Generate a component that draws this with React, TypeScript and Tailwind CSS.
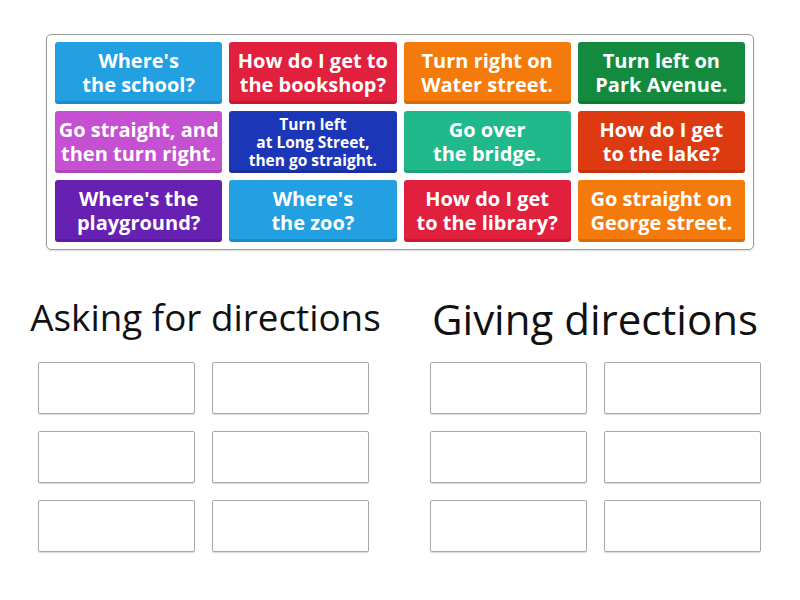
import React from "react";

const tiles: { text: string[]; bg: string; small?: boolean }[] = [
  { text: ["Where's", "the school?"], bg: "bg-[#22a0e2]" },
  { text: ["How do I get to", "the bookshop?"], bg: "bg-[#e0203c]" },
  { text: ["Turn right on", "Water street."], bg: "bg-[#f47a0c]" },
  { text: ["Turn left on", "Park Avenue."], bg: "bg-[#138a3d]" },
  { text: ["Go straight, and", "then turn right."], bg: "bg-[#c650d2]" },
  { text: ["Turn left", "at Long Street,", "then go straight."], bg: "bg-[#1c36b8]", small: true },
  { text: ["Go over", "the bridge."], bg: "bg-[#20b98b]" },
  { text: ["How do I get", "to the lake?"], bg: "bg-[#de3a12]" },
  { text: ["Where's the", "playground?"], bg: "bg-[#6620b2]" },
  { text: ["Where's", "the zoo?"], bg: "bg-[#22a0e2]" },
  { text: ["How do I get", "to the library?"], bg: "bg-[#e0203c]" },
  { text: ["Go straight on", "George street."], bg: "bg-[#f47a0c]" },
];

function Group({ title, size, shift }: { title: string; size: string; shift: string }) {
  return (
    <div className="flex flex-col items-center w-[332px]">
      <div className={`h-[56px] flex items-center justify-center whitespace-nowrap text-[#111] ${size} ${shift}`}>
        {title}
      </div>
      <div className="grid grid-cols-2 gap-x-[17px] gap-y-[17px] mt-[16px]">
        {Array.from({ length: 6 }).map((_, i) => (
          <div key={i} className="w-[157px] h-[52px] border border-[#a8a8a8] rounded-[2px] bg-white shadow-[0_1px_1px_rgba(0,0,0,0.15)]" />
        ))}
      </div>
    </div>
  );
}

export default function App() {
  return (
    <div className="w-[800px] h-[600px] bg-white" style={{ fontFamily: '"Open Sans", sans-serif' }}>
      <div className="pt-[34px]">
        <div className="mx-auto w-[708px] h-[216px] border border-[#9a9a9a] rounded-[5px] px-[8px] py-[7px] shadow-[0_1px_2px_rgba(0,0,0,0.15)]">
          <div className="grid grid-cols-4 gap-[7px]">
            {tiles.map((t, i) => (
              <div
                key={i}
                className={`${t.bg} h-[62px] rounded-[3px] flex flex-col items-center justify-center text-white font-bold text-center shadow-[inset_0_-3px_0_rgba(0,0,0,0.12)] ${t.small ? "text-[15.5px] leading-[18px]" : "text-[20px] leading-[24px]"}`}
              >
                {t.text.map((l, j) => (
                  <div key={j} className="whitespace-nowrap">{l}</div>
                ))}
              </div>
            ))}
          </div>
        </div>
        <div className="flex justify-between pl-[37px] pr-[39px] mt-[40px]">
          <Group title="Asking for directions" size="text-[36.8px]" shift="pl-[5px]" />
          <Group title="Giving directions" size="text-[42px]" shift="" />
        </div>
      </div>
    </div>
  );
}
